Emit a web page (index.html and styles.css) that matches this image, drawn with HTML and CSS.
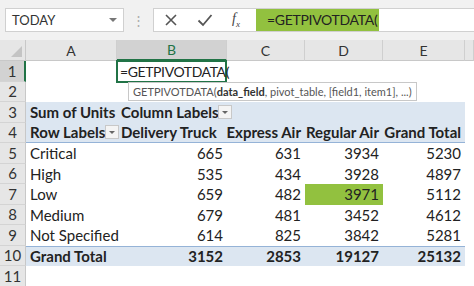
FILE: index.html
```html
<!DOCTYPE html>
<html>
  <head>
    <title>GETPIVOTDATA</title>
    <link rel="stylesheet" href="styles.css">
  </head>
  <body>
    <div class="toolbar">
      <div class="name-box">
        <span>TODAY</span>
        <span class="name-arrow"></span>
      </div>
      <div class="grip">⋮</div>
      <div class="formula-bar">
        <div class="fx-buttons">
          <svg class="fx-icon" width="14" height="14" viewBox="0 0 14 14">
            <path d="M2 2 L12 12 M12 2 L2 12" stroke="#555" stroke-width="1.6" fill="none"/>
          </svg>
          <svg class="fx-icon" width="16" height="14" viewBox="0 0 16 14">
            <path d="M1.5 7.5 L6 12 L14.5 2" stroke="#555" stroke-width="1.8" fill="none"/>
          </svg>
          <span class="fx-label">f<sub>x</sub></span>
        </div>
        <div class="formula-input">
          <span class="formula-text">=GETPIVOTDATA(</span>
        </div>
      </div>
    </div>

    <div class="sheet">
      <div class="corner"><span class="corner-tri"></span></div>
      <div class="col-head">A</div>
      <div class="col-head col-selected">B</div>
      <div class="col-head">C</div>
      <div class="col-head">D</div>
      <div class="col-head">E</div>
      <div class="col-head col-last"></div>

      <div class="row-head row-selected">1</div>
      <div class="cell"></div>
      <div class="cell active-cell">=GETPIVOTDATA(</div>
      <div class="cell"></div>
      <div class="cell"></div>
      <div class="cell"></div>
      <div class="cell"></div>

      <div class="row-head">2</div>
      <div class="cell"></div>
      <div class="cell"></div>
      <div class="cell"></div>
      <div class="cell"></div>
      <div class="cell"></div>
      <div class="cell"></div>

      <div class="row-head">3</div>
      <div class="cell pivot-head bold">Sum of Units</div>
      <div class="cell pivot-head bold">Column Labels <span class="drop"></span></div>
      <div class="cell pivot-head"></div>
      <div class="cell pivot-head"></div>
      <div class="cell pivot-head"></div>
      <div class="cell"></div>

      <div class="row-head">4</div>
      <div class="cell pivot-head pivot-line bold">Row Labels <span class="drop"></span></div>
      <div class="cell pivot-head pivot-line bold">Delivery Truck</div>
      <div class="cell pivot-head pivot-line bold num">Express Air</div>
      <div class="cell pivot-head pivot-line bold num">Regular Air</div>
      <div class="cell pivot-head pivot-line bold num">Grand Total</div>
      <div class="cell"></div>

      <div class="row-head">5</div>
      <div class="cell">Critical</div>
      <div class="cell num">665</div>
      <div class="cell num">631</div>
      <div class="cell num">3934</div>
      <div class="cell num">5230</div>
      <div class="cell"></div>

      <div class="row-head">6</div>
      <div class="cell">High</div>
      <div class="cell num">535</div>
      <div class="cell num">434</div>
      <div class="cell num">3928</div>
      <div class="cell num">4897</div>
      <div class="cell"></div>

      <div class="row-head">7</div>
      <div class="cell">Low</div>
      <div class="cell num">659</div>
      <div class="cell num">482</div>
      <div class="cell num highlight">3971</div>
      <div class="cell num">5112</div>
      <div class="cell"></div>

      <div class="row-head">8</div>
      <div class="cell">Medium</div>
      <div class="cell num">679</div>
      <div class="cell num">481</div>
      <div class="cell num">3452</div>
      <div class="cell num">4612</div>
      <div class="cell"></div>

      <div class="row-head">9</div>
      <div class="cell">Not Specified</div>
      <div class="cell num">614</div>
      <div class="cell num">825</div>
      <div class="cell num">3842</div>
      <div class="cell num">5281</div>
      <div class="cell"></div>

      <div class="row-head">10</div>
      <div class="cell total bold">Grand Total</div>
      <div class="cell total bold num">3152</div>
      <div class="cell total bold num">2853</div>
      <div class="cell total bold num">19127</div>
      <div class="cell total bold num">25132</div>
      <div class="cell"></div>

      <div class="row-head">11</div>
      <div class="cell"></div>
      <div class="cell"></div>
      <div class="cell"></div>
      <div class="cell"></div>
      <div class="cell"></div>
      <div class="cell"></div>

      <div class="tooltip">GETPIVOTDATA(<b>data_field</b>, pivot_table, [field1, item1], ...)</div>
    </div>
  </body>
</html>
```

FILE: styles.css
```css
body {
  margin: 0;
  width: 474px;
  height: 286px;
  overflow: hidden;
  background: white;
  font-family: Lato, "Open Sans", sans-serif;
  color: #222;
}

.toolbar {
  height: 40px;
  background: #f1f1f1;
  display: flex;
  align-items: center;
  padding-left: 5px;
  box-sizing: border-box;
}

.name-box {
  width: 119px;
  height: 24px;
  box-sizing: border-box;
  background: white;
  border: 1px solid #d0d0d0;
  display: flex;
  align-items: center;
  justify-content: space-between;
  padding: 0 6px 0 6px;
  font-size: 13px;
  color: #333;
}

.name-arrow {
  width: 0;
  height: 0;
  border-left: 4px solid transparent;
  border-right: 4px solid transparent;
  border-top: 4px solid #777;
}

.grip {
  width: 29px;
  text-align: center;
  color: #aaa;
  font-size: 13px;
}

.formula-bar {
  flex: 1;
  height: 24px;
  display: flex;
  background: white;
  border: 1px solid #d0d0d0;
  border-right: none;
  box-sizing: border-box;
}

.fx-buttons {
  width: 92px;
  display: flex;
  align-items: center;
  padding-left: 10px;
  gap: 19px;
}

.fx-label {
  font-family: "Liberation Serif", serif;
  font-style: italic;
  font-size: 14px;
  color: #444;
}

.fx-label sub {
  font-size: 9px;
}

.formula-input {
  flex: 1;
  display: flex;
}

.formula-text {
  background: #92c13f;
  width: 123px;
  font-size: 14px;
  letter-spacing: -0.3px;
  line-height: 22px;
  padding-left: 11px;
  box-sizing: border-box;
  color: #222;
}

.sheet {
  position: relative;
  display: grid;
  grid-template-columns: 26px 91px 110px 78px 78px 82px 1fr;
  grid-template-rows: 21px repeat(11, 20.5px);
  font-size: 15px;
}

.corner {
  background: #e6e6e6;
  border-right: 1px solid #c8c8c8;
  border-bottom: 1px solid #c8c8c8;
  position: relative;
}

.corner-tri {
  position: absolute;
  right: 3px;
  bottom: 3px;
  width: 0;
  height: 0;
  border-left: 11px solid transparent;
  border-bottom: 11px solid #c4c4c4;
}

.col-head {
  background: #e6e6e6;
  border-right: 1px solid #cfcfcf;
  border-bottom: 1px solid #c8c8c8;
  display: flex;
  align-items: center;
  justify-content: center;
  color: #333;
  font-size: 14px;
}

.col-selected {
  background: #d2d2d2;
  color: #217346;
  border-bottom: 2px solid #217346;
}

.row-head {
  background: #e6e6e6;
  border-right: 1px solid #c8c8c8;
  border-bottom: 1px solid #d4d4d4;
  display: flex;
  align-items: center;
  justify-content: center;
  color: #333;
}

.row-selected {
  background: #d2d2d2;
  border-right: 2px solid #217346;
}

.cell {
  display: flex;
  align-items: center;
  padding: 0 4px;
  white-space: nowrap;
  overflow: visible;
}

.active-cell {
  border: 2px solid #217346;
  margin: -1px 0 -1px -1px;
  padding-left: 2px;
  position: relative;
  font-size: 14px;
  letter-spacing: -0.4px;
}

.bold {
  font-weight: bold;
}

.num {
  justify-content: flex-end;
}

.pivot-head {
  background: #dce6f1;
}

.pivot-line {
  border-bottom: 1px solid #95b3d7;
}

.total {
  background: #dce6f1;
  border-top: 1px solid #95b3d7;
}

.highlight {
  background: #92c13f;
}

.drop {
  width: 12px;
  height: 12px;
  margin-left: auto;
  margin-right: -3px;
  background: #f4f4f4;
  border: 1px solid #c8c8c8;
  position: relative;
  flex: none;
}

.drop::after {
  content: "";
  position: absolute;
  left: 3px;
  top: 5px;
  border-left: 3px solid transparent;
  border-right: 3px solid transparent;
  border-top: 3px solid #666;
}

.tooltip {
  position: absolute;
  left: 128px;
  top: 42px;
  height: 17px;
  padding: 0 4px;
  background: white;
  border: 1px solid #c8c8c8;
  font-size: 11px;
  line-height: 17px;
  color: #555;
  white-space: nowrap;
}

.tooltip b {
  color: #333;
}
```
